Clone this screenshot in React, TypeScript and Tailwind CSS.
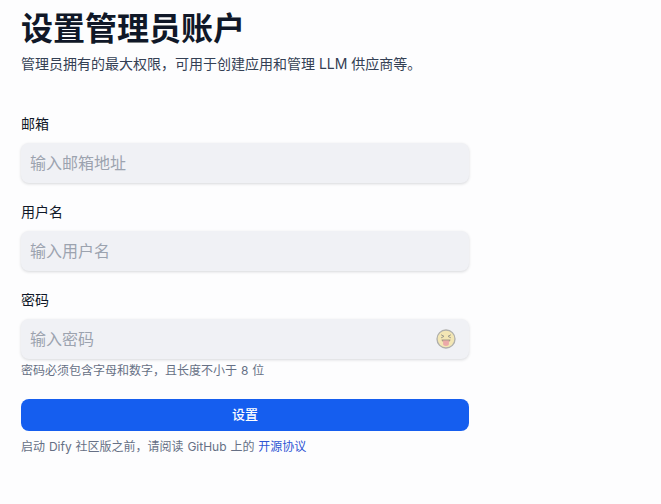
export default function App() {
  const font = "font-['Inter','Noto_Sans_CJK_SC',sans-serif]";
  const inputCls = "h-10 w-full rounded-lg bg-[#f0f1f5] pl-[9px] pr-3 text-base leading-10 text-[#9ca3af] shadow-[0_1px_3px_rgba(16,24,40,0.16)] flex items-center justify-between";
  return (
    <div className={`${font} h-[504px] w-[661px] overflow-hidden bg-[#fdfdfe] pl-[21px]`}>
      <div className="w-[448px]">
        <h1 className="mt-[9px] text-[32px] leading-[40px] font-bold text-[#101828]">设置管理员账户</h1>
        <p className="mt-[5px] whitespace-nowrap text-sm leading-5 text-[#344054]">管理员拥有的最大权限，可用于创建应用和管理 LLM 供应商等。</p>
        <div className="mt-[40px] flex items-center text-sm leading-5 text-[#101828]">邮箱</div>
        <div className={`mt-[9px] ${inputCls}`}>输入邮箱地址</div>
        <div className="mt-[19px] text-sm leading-5 text-[#101828]">用户名</div>
        <div className={`mt-[9px] ${inputCls}`}>输入用户名</div>
        <div className="mt-[19px] text-sm leading-5 text-[#101828]">密码</div>
        <div className={`mt-[9px] ${inputCls}`}>
          <span>输入密码</span>
          <svg width="20" height="20" viewBox="0 0 18 18" className="mr-[1px]">
            <circle cx="9" cy="9" r="8.1" fill="#f3e6b4" stroke="#b0b0ac" strokeWidth="1.2" />
            <path d="M4.6 5.2 L7.2 6.6 L4.6 8 M13.4 5.2 L10.8 6.6 L13.4 8" fill="none" stroke="#9c9a8c" strokeWidth="0.9" />
            <path d="M5 9.4 H13 C13 10.6 12.2 11.4 11.6 11.4 H6.4 C5.8 11.4 5 10.6 5 9.4Z" fill="#a89a86" />
            <path d="M6.4 10.4 H11.6 V13.8 C11.6 15.8 6.4 15.8 6.4 13.8Z" fill="#eba9a9" />
          </svg>
        </div>
        <p className="mt-[3px] text-xs leading-[18px] text-[#667085] [word-spacing:0.5px]">密码必须包含字母和数字，且长度不小于 8 位</p>
        <button className="mt-[19px] h-8 w-full rounded-lg bg-[#155eef] text-[13px] font-medium text-white">设置</button>
        <p className="mt-[7px] text-xs leading-[18px] text-[#667085] [word-spacing:0.5px]">
          启动 Dify 社区版之前，请阅读 GitHub 上的 <a className="text-[#2f55d4]">开源协议</a>
        </p>
      </div>
    </div>
  );
}
